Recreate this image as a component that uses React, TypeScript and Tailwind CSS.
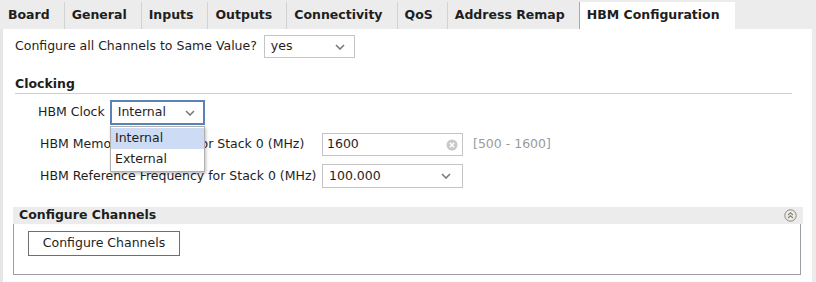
import React from "react";

const Chevron = () => (
  <svg width="10" height="6" viewBox="0 0 10 6" className="block">
    <path d="M1 1 L5 5 L9 1" fill="none" stroke="#7a7a7a" strokeWidth="1.6" />
  </svg>
);

const tabs = ["Board", "General", "Inputs", "Outputs", "Connectivity", "QoS", "Address Remap"];

export default function App() {
  return (
    <div
      className="w-[816px] h-[282px] bg-white overflow-hidden flex flex-col text-[#1e1e1e]"
      style={{ fontFamily: '"DejaVu Sans", Verdana, sans-serif' }}
    >
      {/* tab bar */}
      <div className="h-[29px] bg-[#ececec] flex items-end shrink-0">
        {tabs.map((t, i) => (
          <div
            key={t}
            className={`h-[27px] flex items-center pr-[14px] pb-[1px] text-[12.5px] font-bold ${
              i < tabs.length - 1 ? "border-r border-[#d2d2d2]" : "border-r border-[#a8a8a8]"
            }`}
            style={{ paddingLeft: i === 0 ? 8 : 7 }}
          >
            {t}
          </div>
        ))}
        <div className="h-[27px] bg-white flex items-center pl-[7px] pr-[15px] pb-[1px] text-[12.5px] font-bold">
          HBM Configuration
        </div>
      </div>

      {/* body */}
      <div className="flex flex-1">
        <div className="w-[3px] bg-[#e6e6e6]" />
        <div className="flex-1 relative pl-[12px] pr-[9px]">
          {/* row 1 */}
          <div className="flex items-center mt-[6px] h-[23px] text-[12.5px]">
            <span>Configure all Channels to Same Value?</span>
            <div className="ml-[7px] w-[91px] h-[23px] border border-[#c4c4c4] flex items-center justify-between pl-[6px] pr-[9px]">
              <span>yes</span>
              <Chevron />
            </div>
          </div>

          {/* Clocking */}
          <div className="mt-[18px] mr-[11px] text-[12.5px] font-bold leading-[16px] pb-[1px] border-b border-[#cfcfcf]">
            Clocking
          </div>

          {/* HBM Clock */}
          <div className="flex items-center mt-[6px] h-[25px] text-[12.5px] pl-[23px]">
            <span>HBM Clock</span>
            <div className="ml-[5px] w-[95px] h-[25px] border-2 border-[#5a83b4] flex items-center justify-between pl-[6px] pr-[8px]">
              <span>Internal</span>
              <Chevron />
            </div>
          </div>

          {/* HBM Memory */}
          <div className="flex items-center mt-[8px] h-[23px] text-[12.5px] pl-[25px]">
            <span className="w-[282px] whitespace-nowrap">HBM Memory Frequency for Stack 0 (MHz)</span>
            <div className="w-[141px] h-[23px] border border-[#c4c4c4] flex items-center justify-between pl-[4px] pr-[4px]">
              <span>1600</span>
              <svg width="12" height="12" viewBox="0 0 12 12" className="block">
                <circle cx="6" cy="6" r="5.5" fill="#c8c8c8" />
                <path d="M3.8 3.8 L8.2 8.2 M8.2 3.8 L3.8 8.2" stroke="#fff" strokeWidth="1.5" />
              </svg>
            </div>
            <span className="ml-[10px] text-[#9a9a9a]">[500 - 1600]</span>
          </div>

          {/* HBM Reference */}
          <div className="flex items-center mt-[8px] h-[24px] text-[12.5px] pl-[25px]">
            <span className="w-[282px] whitespace-nowrap">HBM Reference Frequency for Stack 0 (MHz)</span>
            <div className="w-[141px] h-[24px] border border-[#c4c4c4] flex items-center justify-between pl-[6px] pr-[11px]">
              <span>100.000</span>
              <Chevron />
            </div>
          </div>

          {/* Configure Channels section */}
          <div className="mt-[19px] ml-[-2px]">
            <div className="h-[17px] bg-[#ececec] flex items-center justify-between pl-[6px] pr-[6px] text-[12.5px] font-bold">
              <span>Configure Channels</span>
              <svg width="13" height="13" viewBox="0 0 13 13" className="block">
                <circle cx="6.5" cy="6.5" r="5.7" fill="none" stroke="#8c8577" strokeWidth="1" />
                <path d="M4 6 L6.5 3.8 L9 6 M4 9 L6.5 6.8 L9 9" fill="none" stroke="#8c8577" strokeWidth="1.1" />
              </svg>
            </div>
            <div className="h-[51px] border border-t-0 border-[#9aa0a4] mr-[2px] pt-[7px] pl-[14px]">
              <div className="w-[152px] h-[25px] border border-[#6e6e6e] flex items-center justify-center text-[12.5px]">
                Configure Channels
              </div>
            </div>
          </div>

          {/* dropdown overlay */}
          <div className="absolute left-[107px] top-[97px] w-[95px] h-[46px] bg-white border border-[#b0b0b0] shadow-[1px_2px_3px_rgba(0,0,0,0.25)] text-[12.5px] pt-[1px]">
            <div className="h-[21px] bg-[#cddcf4] flex items-center pl-[4px]">Internal</div>
            <div className="h-[21px] flex items-center pl-[4px]">External</div>
          </div>
        </div>
        <div className="w-[4px] bg-[#ececec]" />
      </div>
    </div>
  );
}
